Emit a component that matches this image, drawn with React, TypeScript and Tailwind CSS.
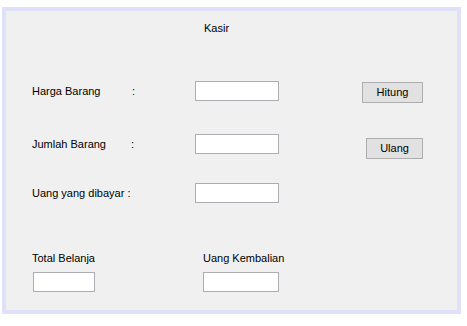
import React from "react";

const font = { fontFamily: '"Liberation Sans", Arial, sans-serif' };

const Field = ({ className = "w-[84px]" }: { className?: string }) => (
  <input
    type="text"
    className={`h-[20px] ${className} border border-[#abadb3] bg-white outline-none`}
  />
);

const Button = ({ label, className }: { label: string; className: string }) => (
  <button
    className={`h-[21px] ${className} border border-[#adadad] bg-[#e1e1e1] text-[11px] leading-none text-black`}
  >
    {label}
  </button>
);

export default function App() {
  return (
    <div className="pl-[2px] pt-[7px] bg-white min-h-[326px] text-[11px] text-black" style={font}>
      <div className="w-[459px] h-[307px] border-4 border-[#e0e0f8] bg-[#f0f0f0] flex flex-col">
        <div className="mt-[11px] ml-[198px] leading-[13px]">Kasir</div>

        {/* Harga Barang */}
        <div className="mt-[46px] flex items-start h-[22px]">
          <div className="ml-[26px] w-[100px] leading-[20px]">Harga Barang</div>
          <div className="w-[63px] leading-[20px]">:</div>
          <Field />
          <div className="ml-[83px] mt-[1px]">
            <Button label="Hitung" className="w-[61px]" />
          </div>
        </div>

        {/* Jumlah Barang */}
        <div className="mt-[31px] flex items-start h-[25px]">
          <div className="ml-[26px] w-[99px] leading-[20px]">Jumlah Barang</div>
          <div className="w-[64px] leading-[20px]">:</div>
          <Field />
          <div className="ml-[87px] mt-[4px]">
            <Button label="Ulang" className="w-[57px]" />
          </div>
        </div>

        {/* Uang yang dibayar */}
        <div className="mt-[24px] flex items-start h-[20px]">
          <div className="ml-[26px] w-[163px] leading-[20px]">Uang yang dibayar :</div>
          <Field />
        </div>

        {/* Totals */}
        <div className="mt-[49px] flex">
          <div className="ml-[26px] w-[171px] leading-[13px]">Total Belanja</div>
          <div className="leading-[13px]">Uang Kembalian</div>
        </div>
        <div className="mt-[7px] flex">
          <div className="ml-[27px]">
            <Field className="w-[62px]" />
          </div>
          <div className="ml-[108px]">
            <Field className="w-[76px]" />
          </div>
        </div>
      </div>
    </div>
  );
}
